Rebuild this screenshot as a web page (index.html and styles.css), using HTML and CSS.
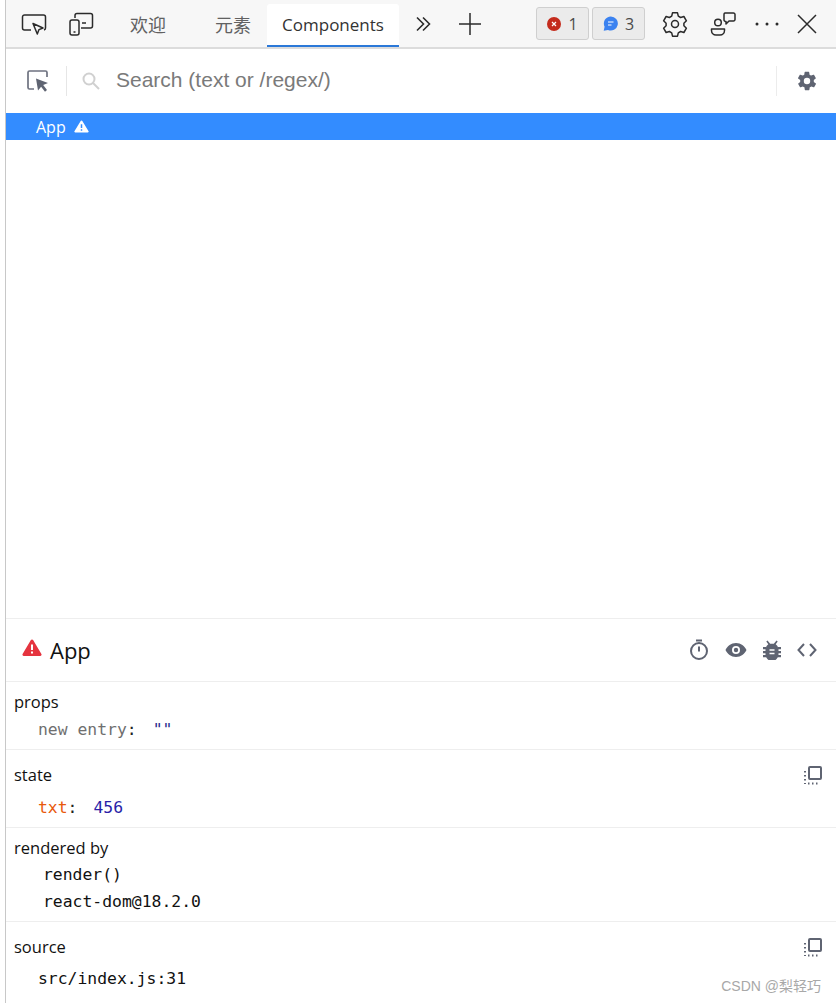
FILE: index.html
```html
<!DOCTYPE html>
<html lang="en">
<head>
<meta charset="utf-8">
<title>Components</title>
<link rel="stylesheet" href="styles.css">
</head>
<body>
<div class="panel">
  <header class="tabbar">
    <div class="tool-icon first">
      <svg width="28" height="28" viewBox="0 0 28 28" fill="none" stroke="#2b2b2b" stroke-width="1.5"><path d="M11 20H4.500a2 2 0 0 1-2-2V7a2 2 0 0 1 2-2h19a2 2 0 0 1 2 2v11a2 2 0 0 1-1.500 2"/><path d="M13 13.500l10 4.500-4 1.600-1.700 4.400z" stroke-linejoin="round"/></svg>
    </div>
    <div class="tool-icon second">
      <svg width="28" height="28" viewBox="0 0 28 28" fill="none" stroke="#2b2b2b" stroke-width="1.5"><path d="M8 8V5.500a2 2 0 0 1 2-2h13.500a2 2 0 0 1 2 2V16a2 2 0 0 1-2 2H14"/><rect x="3" y="10" width="9" height="15" rx="2"/><path d="M6.500 22h2M15 13h4"/></svg>
    </div>
    <div class="tab tab-welcome">欢迎</div>
    <div class="tab tab-elements">元素</div>
    <div class="tab tab-active">Components</div>
    <div class="chev">
      <svg width="18" height="18" viewBox="0 0 18 18" fill="none" stroke="#2b2b2b" stroke-width="1.6"><path d="M3 2.500l6.500 6.500L3 15.500M9 2.500l6.500 6.500L9 15.500"/></svg>
    </div>
    <div class="plus">
      <svg width="24" height="24" viewBox="0 0 24 24" fill="none" stroke="#2b2b2b" stroke-width="1.5"><path d="M12 1v22M1 12h22"/></svg>
    </div>
    <div class="badges">
      <div class="badge">
        <svg width="14" height="14" viewBox="0 0 14 14"><circle cx="7" cy="7" r="7" fill="#c42b1c"/><path d="M5 5l4 4M9 5l-4 4" stroke="#fff" stroke-width="1.2"/></svg>
        <span>1</span>
      </div>
      <div class="badge">
        <svg width="15" height="15" viewBox="0 0 15 15"><path d="M7.800 0.500a7 7 0 1 1-2.800 13.400L0.700 14.700 1.600 10.700A7 7 0 0 1 7.800 0.500z" fill="#3b82f0"/><path d="M5 6h5.500M5 9h3.500" stroke="#fff" stroke-width="1"/></svg>
        <span>3</span>
      </div>
    </div>
    <div class="gear">
      <svg width="26" height="26" viewBox="0 0 26 26" fill="none" stroke="#2b2b2b" stroke-width="1.5" stroke-linejoin="round"><circle cx="13" cy="13" r="3.500"/><path d="M10.500 1.800h5l.8 3.400 2.300 1.300 3.300-1 2.500 4.300-2.500 2.400v2.600l2.500 2.400-2.500 4.300-3.300-1-2.300 1.300-.8 3.400h-5l-.8-3.400-2.300-1.300-3.300 1-2.500-4.300 2.500-2.400v-2.600L1.600 9.800l2.500-4.300 3.300 1 2.300-1.300z"/></svg>
    </div>
    <div class="people">
      <svg width="26" height="26" viewBox="0 0 26 26" fill="none" stroke="#2b2b2b" stroke-width="1.5" stroke-linejoin="round"><circle cx="8" cy="11.500" r="3.300"/><path d="M1.500 18h13v1.500a4.500 4.500 0 0 1-4.500 4.500H6a4.500 4.500 0 0 1-4.500-4.500z"/><path d="M15 2h8.500a1.500 1.500 0 0 1 1.500 1.500v5a1.500 1.500 0 0 1-1.500 1.500H19l-3 3V10.500A1.800 1.800 0 0 1 14 8.500v-5A1.500 1.500 0 0 1 15 2z"/></svg>
    </div>
    <div class="dots">
      <svg width="24" height="4" viewBox="0 0 24 4" fill="#2b2b2b"><circle cx="2" cy="2" r="1.500"/><circle cx="12" cy="2" r="1.500"/><circle cx="22" cy="2" r="1.500"/></svg>
    </div>
    <div class="close">
      <svg width="20" height="20" viewBox="0 0 20 20" fill="none" stroke="#2b2b2b" stroke-width="1.5"><path d="M1 1l18 18M19 1L1 19"/></svg>
    </div>
  </header>

  <div class="searchbar">
    <svg class="select-icon" width="24" height="24" viewBox="0 0 24 24" fill="none"><path d="M8 20H3.500a1.500 1.500 0 0 1-1.500-1.500V3.500A1.500 1.500 0 0 1 3.500 2h16A1.500 1.500 0 0 1 21 3.500V8" stroke="#6e7280" stroke-width="1.700"/><path d="M10 9.500l12 4.500-4.800 2 3.800 5-2 1.700-3.900-5-3.100 3.800z" fill="#5f6472"/></svg>
    <div class="vsep"></div>
    <svg class="search-icon" width="18" height="18" viewBox="0 0 18 18" fill="none" stroke="#d0d0d0" stroke-width="2"><circle cx="7" cy="7" r="5.500"/><path d="M11 11l6 6"/></svg>
    <div class="search-text">Search (text or /regex/)</div>
    <div class="vsep end"></div>
    <svg class="settings-icon" width="22" height="22" viewBox="0 0 24 24" fill="#5f6472"><path d="M19.400 13a7.500 7.500 0 0 0 0-2l2.100-1.600a.5.5 0 0 0 .1-.6l-2-3.500a.5.5 0 0 0-.6-.2l-2.500 1a7.300 7.300 0 0 0-1.700-1l-.4-2.700a.5.5 0 0 0-.5-.4h-4a.5.5 0 0 0-.5.400l-.4 2.700a7.300 7.300 0 0 0-1.700 1l-2.500-1a.5.5 0 0 0-.6.2l-2 3.500a.5.5 0 0 0 .1.600L4.600 11a7.500 7.500 0 0 0 0 2l-2.100 1.600a.5.5 0 0 0-.1.600l2 3.500a.5.5 0 0 0 .6.200l2.500-1a7.300 7.300 0 0 0 1.700 1l.4 2.700a.5.5 0 0 0 .5.400h4a.5.5 0 0 0 .5-.4l.4-2.700a7.300 7.300 0 0 0 1.700-1l2.500 1a.5.5 0 0 0 .6-.2l2-3.500a.5.5 0 0 0-.1-.6zM12 15.500a3.500 3.500 0 1 1 0-7 3.500 3.500 0 0 1 0 7z"/></svg>
  </div>

  <div class="tree">
    <div class="tree-row">
      <span>App</span>
      <svg width="15" height="13" viewBox="0 0 16 14"><path d="M8 0.500a1 1 0 0 1 .9.500l6.700 11a1 1 0 0 1-.9 1.500H1.300a1 1 0 0 1-.9-1.500L7.100 1a1 1 0 0 1 .9-.5z" fill="#fff"/><path d="M8 4.500v4M8 10v1.500" stroke="#338cff" stroke-width="1.600"/></svg>
    </div>
  </div>

  <section class="detail-head">
    <svg width="20" height="18" viewBox="0 0 20 18"><path d="M10 0.500a1.300 1.300 0 0 1 1.100.6l8.300 14a1.300 1.300 0 0 1-1.100 1.900H1.700a1.300 1.300 0 0 1-1.100-1.900l8.300-14A1.300 1.300 0 0 1 10 .5z" fill="#e5343f"/><path d="M10 5.500v5.500M10 12.500v2" stroke="#fff" stroke-width="2"/></svg>
    <h1 class="detail-title">App</h1>
    <div class="detail-actions">
      <svg width="20" height="22" viewBox="0 0 20 22" fill="none" stroke="#5f6472" stroke-width="2"><path d="M7 1.500h6"/><circle cx="10" cy="12" r="8"/><path d="M10 7.500v5"/></svg>
      <svg width="22" height="16" viewBox="0 0 22 16"><path d="M11 1C6 1 2.500 4 .5 8c2 4 5.500 7 10.500 7s8.500-3 10.500-7C19.500 4 16 1 11 1zm0 11a4 4 0 1 1 0-8 4 4 0 0 1 0 8z" fill="#5f6472"/><circle cx="11" cy="8" r="2.200" fill="#5f6472"/></svg>
      <svg width="18" height="20" viewBox="0 0 18 20" fill="#5f6472"><path d="M4.500 0.500l2.700 3.300h3.600L13.500 .5l1.200.9-2 2.800A6 6 0 0 1 15.500 9v5.500a6.500 6.500 0 0 1-13 0V9a6 6 0 0 1 2.800-4.800l-2-2.800z"/><path d="M0 7h3v2.300H0zM15 7h3v2.300h-3zM0 11h3v2.300H0zM15 11h3v2.300h-3zM0 15h3v2.300H0zM15 15h3v2.300h-3z"/><path d="M6.500 10h5M6.500 13.500h5" stroke="#fff" stroke-width="1.500"/></svg>
      <svg width="20" height="14" viewBox="0 0 20 14" fill="none" stroke="#5f6472" stroke-width="2"><path d="M7 1L1.500 7 7 13M13 1l5.500 6L13 13"/></svg>
    </div>
  </section>

  <section class="block block-props">
    <div class="block-label">props</div>
    <div class="code row-gap"><span class="key-muted">new entry</span><span class="colon">:</span><span class="val-str">""</span></div>
  </section>

  <section class="block block-state">
    <div class="block-top">
      <div class="block-label">state</div>
      <svg class="copy" width="20" height="20" viewBox="0 0 20 20"><rect x="6" y="2" width="12" height="12" rx="1" fill="none" stroke="#5f6472" stroke-width="2"/><path d="M2 6v1.500M2 10v1.500M2 14v1.500M2 18v1M5 18.500h1.500M9 18.500h1.500M13 18.500h1.500" stroke="#5f6472" stroke-width="2"/></svg>
    </div>
    <div class="code row-state"><span class="key-orange">txt</span><span class="colon">:</span><span class="val-num">456</span></div>
  </section>

  <section class="block block-rendered">
    <div class="block-label">rendered by</div>
    <div class="code owner first-owner">render()</div>
    <div class="code owner">react-dom@18.2.0</div>
  </section>

  <section class="block block-source">
    <div class="block-top">
      <div class="block-label">source</div>
      <svg class="copy" width="20" height="20" viewBox="0 0 20 20"><rect x="6" y="2" width="12" height="12" rx="1" fill="none" stroke="#5f6472" stroke-width="2"/><path d="M2 6v1.500M2 10v1.500M2 14v1.500M2 18v1M5 18.500h1.500M9 18.500h1.500M13 18.500h1.500" stroke="#5f6472" stroke-width="2"/></svg>
    </div>
    <div class="code row-source">src/index.js:31</div>
  </section>
</div>
<div class="watermark">CSDN @梨轻巧</div>
</body>
</html>
```

FILE: styles.css
```css
* { box-sizing: border-box; }
html, body { margin: 0; padding: 0; background: #fff; }
body {
  position: relative;
  width: 836px;
  height: 1003px;
  overflow: hidden;
  padding-left: 5px;
  font-family: "Open Sans", "Noto Sans CJK SC", sans-serif;
  color: #1b1b1b;
}
svg { display: block; flex: none; }
.panel {
  display: flex;
  flex-direction: column;
  height: 1003px;
  border-left: 1px solid #c8c8c8;
}

.tabbar {
  display: flex;
  align-items: center;
  height: 49px;
  flex: none;
  background: #f7f7f7;
  border-bottom: 2px solid #dcdcdc;
}
.tool-icon.first { margin-left: 14px; }
.tool-icon.second { margin-left: 19px; }
.tab {
  font-size: 18px;
  color: #616161;
  height: 44px;
  display: flex;
  align-items: center;
}
.tab-welcome { margin-left: 35px; }
.tab-elements { margin-left: 49px; }
.tab-active {
  margin-left: 16px;
  width: 132px;
  justify-content: center;
  background: #fff;
  color: #333;
  font-size: 17px;
  border-bottom: 2px solid #2b78d8;
  border-radius: 3px 3px 0 0;
  margin-top: 3px;
  height: 43px;
}
.chev { margin-left: 15px; }
.plus { margin-left: 26px; }
.badges { display: flex; gap: 3px; margin-left: 54px; }
.badge {
  display: flex;
  align-items: center;
  justify-content: center;
  gap: 7px;
  width: 53px;
  height: 33px;
  background: #ebebeb;
  border: 1px solid #cfcfcf;
  border-radius: 3px;
  font-size: 16px;
  color: #4a4a4a;
}
.gear { margin-left: 17px; }
.people { margin-left: 22px; }
.dots { margin-left: 19px; }
.close { margin-left: 18px; }

.searchbar {
  display: flex;
  align-items: center;
  height: 64px;
  flex: none;
}
.select-icon { margin-left: 20px; }
.vsep { width: 1px; height: 30px; background: #e6e6e6; margin-left: 16px; }
.search-icon { margin-left: 15px; }
.search-text {
  margin: -2px 0 0 16px;
  font-family: "Liberation Sans", sans-serif;
  font-size: 21px;
  color: #7a7a7a;
  flex: 1;
}
.vsep.end { margin-left: 0; background: #ececec; }
.settings-icon { margin: 0 18px 0 19px; }

.tree { height: 506px; flex: none; border-bottom: 1px solid #eee; }
.tree-row {
  display: flex;
  align-items: center;
  gap: 8px;
  height: 27px;
  padding-left: 30px;
  background: #338cff;
  color: #fff;
  font-size: 16px;
}

.detail-head {
  display: flex;
  align-items: center;
  height: 63px;
  flex: none;
  padding: 0 19px 0 16px;
  border-bottom: 1px solid #eee;
}
.detail-head > svg { margin-top: -5px; }
.detail-title { margin: 0 0 0 8px; font-size: 22px; font-weight: 400; color: #111; }
.detail-actions { display: flex; align-items: center; gap: 16px; margin-left: auto; }

.block { padding: 0 8px; flex: none; border-bottom: 1px solid #eee; }
.block-props { height: 68px; padding-top: 9px; }
.block-state { height: 78px; padding-top: 14px; }
.block-rendered { height: 94px; padding-top: 9px; }
.block-source { flex: 1; border-bottom: 0; padding-top: 14px; }
.block-label { font-size: 16.5px; line-height: 22px; color: #111; }
.block-top { display: flex; justify-content: space-between; align-items: flex-start; }
.copy { margin: 1px 5px 0 0; }

.code {
  font-family: "DejaVu Sans Mono", monospace;
  font-size: 16.4px;
  line-height: 24px;
  color: #111;
  padding-left: 24px;
  white-space: pre;
}
.row-gap { margin-top: 5px; }
.row-state { margin-top: 10px; }
.row-source { margin-top: 9px; }
.owner { padding-left: 29px; line-height: 27px; }
.first-owner { margin-top: 2px; }
.key-muted { color: #6f6f6f; }
.key-orange { color: #e8590c; }
.colon { margin-right: 16px; color: #222; }
.val-str { color: #2a2a8c; }
.val-num { color: #2a1fa8; }

.watermark {
  position: absolute;
  right: 15px;
  bottom: 8px;
  font-family: "Liberation Sans", "Noto Sans CJK SC", sans-serif;
  font-size: 14px;
  color: #a8a8a8;
}
```
